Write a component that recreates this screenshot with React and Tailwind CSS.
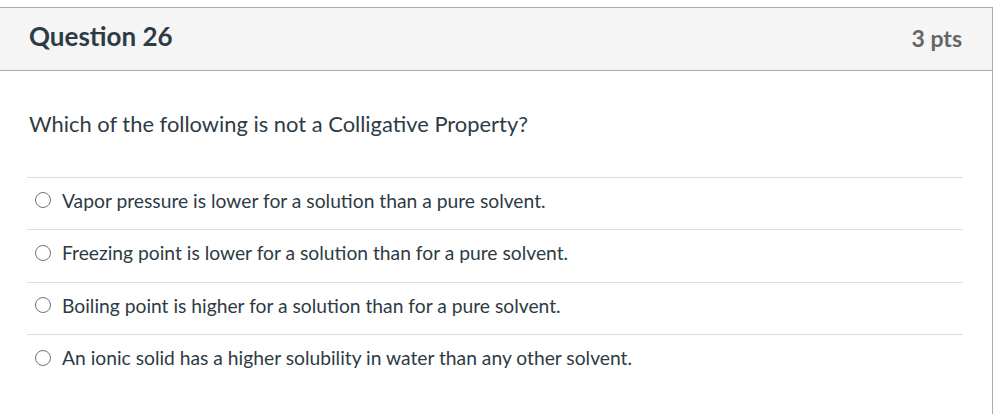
export default function App() {
  const answers = [
    "Vapor pressure is lower for a solution than a pure solvent.",
    "Freezing point is lower for a solution than for a pure solvent.",
    "Boiling point is higher for a solution than for a pure solvent.",
    "An ionic solid has a higher solubility in water than any other solvent.",
  ];
  return (
    <div className="w-[1004px] h-[414px] bg-white overflow-hidden" style={{ fontFamily: "Lato, 'Noto Sans', sans-serif" }}>
      <div className="mt-[7px] w-[993px] h-[407px] border-t border-r border-[#aaaaaa] bg-white">
        <div className="h-[63px] bg-[#f5f5f5] border-b border-[#aaaaaa] flex items-center justify-between pl-[29px] pr-[30px]">
          <h2 className="text-[26px] font-bold text-[#2d3b45] leading-none mb-[7px]">Question 26</h2>
          <div className="text-[23px] font-bold text-[#666666] leading-none mb-[2px]">3 pts</div>
        </div>
        <div className="pl-[29px] pr-[29px]">
          <p className="text-[21.9px] text-[#2d3b45] leading-none pt-[42px] pb-[42px]">
            Which of the following is not a Colligative Property?
          </p>
          <div className="ml-[-2px]">
            {answers.map((a, i) => (
              <div key={i} className="border-t border-[#dddddd] h-[52.5px]">
                <div className="h-[45px] flex items-center">
                  <span className="ml-[8px] w-[16px] h-[16px] rounded-full border-[1.5px] border-[#727272] bg-white shrink-0"></span>
                  <span className="ml-[11px] text-[19.25px] text-[#2d3b45] leading-none">{a}</span>
                </div>
              </div>
            ))}
          </div>
        </div>
      </div>
    </div>
  );
}
